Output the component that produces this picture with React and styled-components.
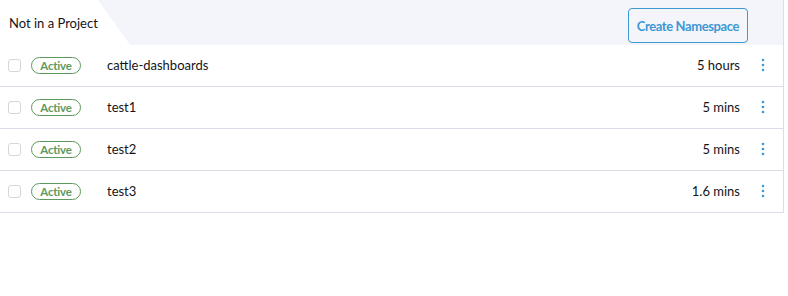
import React from 'react';
import styled, {createGlobalStyle} from 'styled-components';

const GlobalStyle = createGlobalStyle`
  body {
    margin: 0;
    background: #fff;
    font-family: Lato, "Noto Sans", sans-serif;
    color: #141419;
  }
`

const Wrap = styled.div`
  width: 783px;
  border-right: 1px solid #dcdee7;
`

const Header = styled.div`
  height: 45px;
  background: #f4f5fa;
  display: flex;
  align-items: flex-start;
  justify-content: space-between;
`

const Tab = styled.div`
  height: 45px;
  width: 132px;
  background: #fff;
  clip-path: polygon(0 0, 98px 0, 130px 100%, 0 100%);
  font-size: 13px;
  line-height: 46px;
  padding-left: 9px;
  box-sizing: border-box;
`

const CreateButton = styled.button`
  margin-top: 8px;
  margin-right: 35px;
  height: 35px;
  padding: 0 8px;
  background: transparent;
  border: 1px solid #3d98d3;
  border-radius: 4px;
  color: #3d98d3;
  font-family: Lato, "Noto Sans", sans-serif;
  font-size: 13px;
  font-weight: 700;
  letter-spacing: -0.4px;
  cursor: pointer;
`

const Row = styled.div`
  height: 40px;
  padding-bottom: 1px;
  display: grid;
  grid-template-columns: 31px 76px 1fr auto 43px;
  align-items: center;
  border-bottom: 1px solid #dcdee7;
  font-size: 13px;
`

const Check = styled.span`
  display: block;
  width: 11px;
  height: 11px;
  margin-left: 8px;
  border: 1px solid #d5d6dc;
  border-radius: 3px;
  background: #fff;
`

const Badge = styled.span`
  display: inline-flex;
  align-items: center;
  justify-content: center;
  width: 48px;
  height: 15px;
  border: 1px solid #5d995d;
  border-radius: 9px;
  color: #5d995d;
  font-size: 11.5px;
  font-weight: 700;
  letter-spacing: -0.2px;
`

const Name = styled.span`
  font-size: 13px;
`

const Age = styled.span`
  text-align: right;
`

const Actions = styled.span`
  display: flex;
  justify-content: center;
  padding-left: 2px;
`

const Dots = () => (
  <svg width="4" height="14" viewBox="0 0 4 14">
    <circle cx="2" cy="2" r="1.3" fill="#3d98d3" />
    <circle cx="2" cy="7" r="1.3" fill="#3d98d3" />
    <circle cx="2" cy="12" r="1.3" fill="#3d98d3" />
  </svg>
)

const rows = [
  {name: 'cattle-dashboards', age: '5 hours'},
  {name: 'test1', age: '5 mins'},
  {name: 'test2', age: '5 mins'},
  {name: 'test3', age: '1.6 mins'},
]

export default function App() {
  return (
    <>
      <GlobalStyle />
      <Wrap>
        <Header>
          <Tab>Not in a Project</Tab>
          <CreateButton>Create Namespace</CreateButton>
        </Header>
        {rows.map(r => (
          <Row key={r.name}>
            <Check />
            <span><Badge>Active</Badge></span>
            <Name>{r.name}</Name>
            <Age>{r.age}</Age>
            <Actions><Dots /></Actions>
          </Row>
        ))}
      </Wrap>
    </>
  )
}
